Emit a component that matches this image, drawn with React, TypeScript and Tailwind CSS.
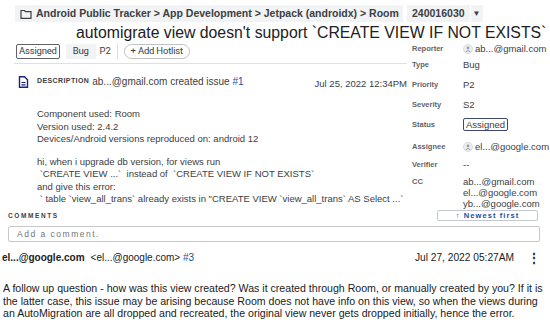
// Issue tracker detail view
const Avatar = () => (
    <svg width="10" height="10" viewBox="0 0 10 10" className="shrink-0">
        <circle cx="5" cy="5" r="4.5" fill="#eceff1" stroke="#c7c9cc" strokeWidth="0.6" />
        <circle cx="5" cy="4" r="1.4" fill="#9aa0a6" />
        <path d="M2.6 7.6 Q5 5.6 7.4 7.6" stroke="#9aa0a6" strokeWidth="1" fill="none" />
    </svg>
);

const SideRow = ({ label, children, className = "" }: { label: string; children: React.ReactNode; className?: string }) => (
    <div className={`flex items-start ${className}`}>
        <div className="w-[51px] shrink-0 text-[7.5px] font-bold text-[#5f6368] leading-[14px]">{label}</div>
        <div className="text-[9.5px] text-[#3c4043] leading-[14px]">{children}</div>
    </div>
);

export default function App() {
    return (
        <div className="w-[550px] h-[326px] bg-white overflow-hidden font-['Liberation_Sans',Arial,sans-serif] text-[#202124]">
            {/* breadcrumb */}
            <div className="flex items-center pt-[5px] pl-[15px]">
                <div className="h-[17px] w-[388px] bg-[#f1f3f4] flex items-center pl-[5px] gap-[4px] text-[10.5px] font-bold text-[#3c4043]">
                    <svg width="12" height="10" viewBox="0 0 12 10" fill="none" stroke="#3c4043" strokeWidth="1.2">
                        <path d="M1 1.5h3.5l1 1.2H11v6.6H1z" />
                    </svg>
                    <span>Android Public Tracker &gt; App Development &gt; Jetpack (androidx) &gt; Room</span>
                </div>
                <div className="ml-[4px] h-[17px] flex items-center bg-[#f1f3f4] text-[10.5px] font-bold text-[#3c4043]">
                    <span className="px-[5px]">240016030</span>
                    <span className="h-[17px] w-[13px] border-l border-white flex items-center justify-center text-[8px]">▼</span>
                </div>
            </div>

            {/* title */}
            <div className="pl-[76px] mt-[1px] text-[15.8px] leading-[19px] text-[#202124] whitespace-nowrap">
                automigrate view doesn't support `CREATE VIEW IF NOT EXISTS`
            </div>

            <div className="flex">
                {/* left column */}
                <div className="w-[407px] shrink-0">
                    <div className="flex items-center h-[16px] mt-[1px] pl-[16px] text-[9.5px] font-['Roboto',sans-serif] text-[#3c4043] tracking-[-0.2px]">
                        <span className="h-[15px] px-[2px] flex items-center border border-[#5f6368] rounded-[2px]">Assigned</span>
                        <span className="ml-[6px] h-[15px] px-[7px] flex items-center bg-[#f1f3f4]">Bug</span>
                        <span className="ml-[4px]">P2</span>
                        <span className="ml-[6px] h-[15px] w-px bg-[#dadce0]" />
                        <span className="ml-[6px] h-[15px] px-[6px] flex items-center border border-[#bdc1c6] rounded-full">+ Add Hotlist</span>
                    </div>
                    <div className="ml-[14px] mt-[4px] h-px bg-[#e0e0e0]" />

                    <div className="flex items-start justify-between pl-[18px] mt-[10px]">
                        <div className="flex items-center gap-[8px]">
                            <svg width="11" height="12" viewBox="0 0 11 12" fill="none">
                                <path d="M1.5 0.8h5l3 3v7.4h-8z" stroke="#1a237e" strokeWidth="1.4" fill="white" />
                                <path d="M3.5 6.5h4M3.5 8.8h4" stroke="#1a237e" strokeWidth="1.2" />
                            </svg>
                            <span className="text-[7px] font-bold tracking-[0.4px] text-[#3c4043]">DESCRIPTION</span>
                            <span className="-ml-[5px] text-[10px] text-[#3c4043]">ab...@gmail.com created issue <span className="text-[#1a4fa0]">#1</span></span>
                        </div>
                        <span className="mt-[3px] text-[9.5px] text-[#3c4043]">Jul 25, 2022 12:34PM</span>
                    </div>

                    <div className="pl-[37px] mt-[17px] text-[9.5px] leading-[12.5px] text-[#3c4043] whitespace-pre">
                        <div>Component used: Room</div>
                        <div>Version used: 2.4.2</div>
                        <div>Devices/Android versions reproduced on: android 12</div>
                        <div className="h-[10px]" />
                        <div>hi, when i upgrade db version, for views run</div>
                        <div> `CREATE VIEW ...`  instead of  `CREATE VIEW IF NOT EXISTS`</div>
                        <div>and give this error:</div>
                        <div> ` table `view_all_trans` already exists in "CREATE VIEW `view_all_trans` AS Select ...`</div>
                    </div>
                </div>

                {/* sidebar */}
                <div className="pl-[5px] flex flex-col">
                    <SideRow label="Reporter">
                        <span className="flex items-center gap-[2px] h-[14px]"><Avatar />ab...@gmail.com</span>
                    </SideRow>
                    <SideRow label="Type" className="mt-[2px]">Bug</SideRow>
                    <SideRow label="Priority" className="mt-[6px]">P2</SideRow>
                    <SideRow label="Severity" className="mt-[6px]">S2</SideRow>
                    <SideRow label="Status" className="mt-[6px]">
                        <span className="inline-flex items-center h-[13px] px-[2px] border border-[#3c4a6b] rounded-[2px] leading-[11px]">Assigned</span>
                    </SideRow>
                    <SideRow label="Assignee" className="mt-[8px]">
                        <span className="flex items-center gap-[2px] h-[14px]"><Avatar />el...@google.com</span>
                    </SideRow>
                    <SideRow label="Verifier" className="mt-[4px]">--</SideRow>
                    <div className="flex items-start mt-[4px]">
                        <div className="w-[51px] shrink-0 text-[7.5px] font-bold text-[#5f6368] leading-[11px]">CC</div>
                        <div className="text-[9.5px] text-[#3c4043] leading-[11px]">
                            <div>ab...@gmail.com</div>
                            <div>el...@google.com</div>
                            <div>yb...@google.com</div>
                        </div>
                    </div>
                </div>
            </div>

            {/* comments header */}
            <div className="flex items-start justify-between pl-[8px] pr-[12px] mt-[1px]">
                <span className="mt-[1px] text-[6.5px] font-bold tracking-[1.6px] text-[#3c4043] leading-[9px]">COMMENTS</span>
                <span className="h-[11px] w-[101px] flex items-center justify-center border border-[#c5c8cc] rounded-[2px] text-[7.5px] font-bold tracking-[1.1px] text-[#1a4fa0]">↑ Newest first</span>
            </div>

            <div className="mx-[8px] mr-[10px] mt-[5px] h-[16px] border border-[#c5c8cc] rounded-[2px] flex items-center pl-[8px] text-[8.5px] tracking-[1.5px] text-[#70757a]">
                Add a comment.
            </div>

            {/* comment */}
            <div className="flex items-center justify-between pl-[2px] pr-[10px] mt-[8px]">
                <div className="flex items-baseline gap-[6px] text-[#202124]">
                    <span className="text-[10px] font-bold">el...@google.com</span>
                    <span className="text-[10px]">&lt;el...@google.com&gt; <span className="text-[#1a4fa0]">#3</span></span>
                </div>
                <div className="flex items-center gap-[14px]">
                    <span className="text-[10.2px]">Jul 27, 2022 05:27AM</span>
                    <span className="text-[12px] font-bold leading-none">⋮</span>
                </div>
            </div>

            <div className="pl-[3px] mt-[17px] text-[10.6px] leading-[12.2px] text-[#202124] whitespace-nowrap">
                <div>A follow up question - how was this view created? Was it created through Room, or manually created by you? If it is</div>
                <div>the latter case, this issue may be arising because Room does not have info on this view, so when the views during</div>
                <div>an AutoMigration are all dropped and recreated, the original view never gets dropped initially, hence the error.</div>
            </div>
        </div>
    );
}
